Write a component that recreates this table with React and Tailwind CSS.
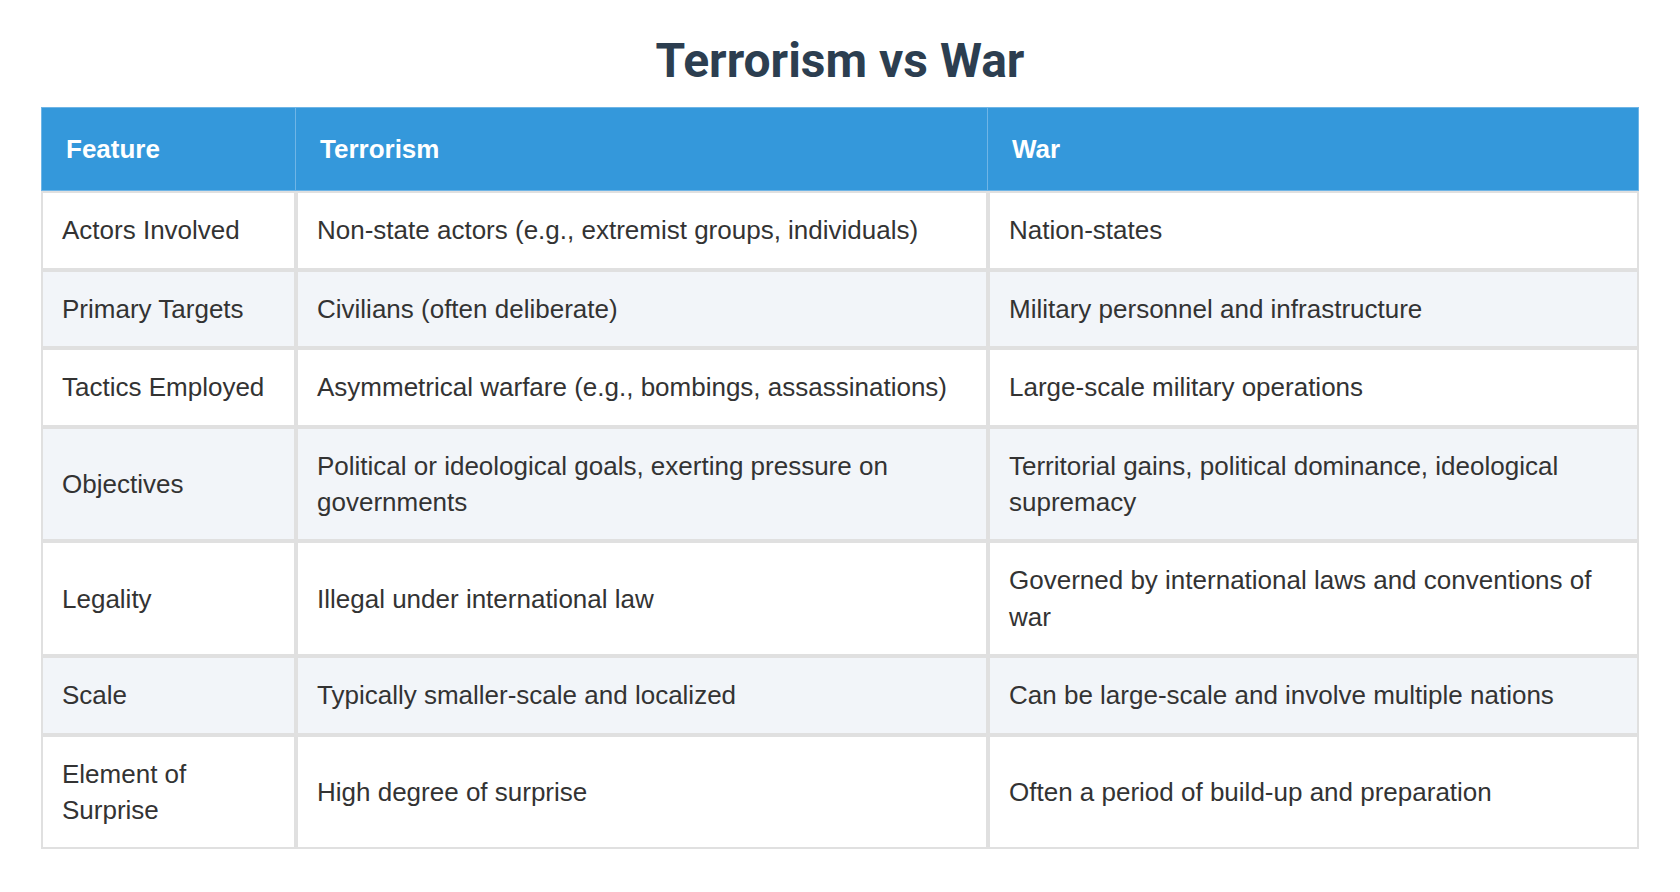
const rows = [
  ["Actors Involved", "Non-state actors (e.g., extremist groups, individuals)", "Nation-states"],
  ["Primary Targets", "Civilians (often deliberate)", "Military personnel and infrastructure"],
  ["Tactics Employed", "Asymmetrical warfare (e.g., bombings, assassinations)", "Large-scale military operations"],
  ["Objectives", "Political or ideological goals, exerting pressure on governments", "Territorial gains, political dominance, ideological supremacy"],
  ["Legality", "Illegal under international law", "Governed by international laws and conventions of war"],
  ["Scale", "Typically smaller-scale and localized", "Can be large-scale and involve multiple nations"],
  ["Element of Surprise", "High degree of surprise", "Often a period of build-up and preparation"],
];

export default function App() {
  return (
    <div className="min-h-[892px] bg-white px-[41px] pt-[32px]">
      <h1
        className="text-center text-[48px] font-bold leading-[58px] text-[#2c3e50] mb-[17px]"
        style={{ fontFamily: "Roboto, sans-serif" }}
      >
        Terrorism vs War
      </h1>
      <table
        className="w-full table-fixed border-separate border-spacing-0 text-[26px] leading-[36.4px] text-[#333]"
        style={{ fontFamily: "'Liberation Sans', Arial, sans-serif" }}
      >
        <colgroup>
          <col className="w-[255px]" />
          <col className="w-[692px]" />
          <col />
        </colgroup>
        <thead>
          <tr className="bg-[#3498db] text-white">
            <th className="border border-[#6fb5e6] py-[23px] pl-6 pr-5 text-left font-bold">Feature</th>
            <th className="border border-[#6fb5e6] border-l-0 py-[23px] pl-6 pr-5 text-left font-bold">Terrorism</th>
            <th className="border border-[#6fb5e6] border-l-0 py-[23px] pl-6 pr-5 text-left font-bold">War</th>
          </tr>
        </thead>
        <tbody>
          {rows.map((r, i) => (
            <tr key={i} className={i % 2 === 1 ? "bg-[#f2f5f9]" : "bg-white"}>
              {r.map((c, j) => (
                <td
                  key={j}
                  className="border-2 border-[#e0e0e0] py-[19px] px-[19px] align-middle"
                >
                  {c}
                </td>
              ))}
            </tr>
          ))}
        </tbody>
      </table>
    </div>
  );
}
